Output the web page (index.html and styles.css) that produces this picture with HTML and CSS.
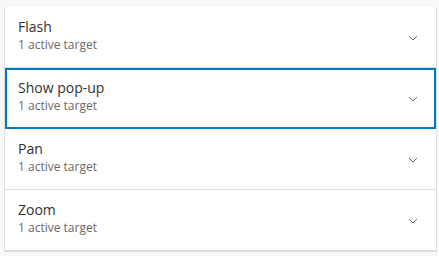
FILE: index.html
```html
<!DOCTYPE html>
<html lang="en">
<head>
<meta charset="utf-8">
<title>Actions</title>
<link rel="stylesheet" href="styles.css">
</head>
<body>
<div class="list">
  <div class="row">
    <div class="text">
      <div class="title">Flash</div>
      <div class="sub">1 active target</div>
    </div>
    <svg class="chev" width="16" height="16" viewBox="0 0 16 16"><polyline points="4,6 8,10 12,6" fill="none" stroke="#6a6a6a" stroke-width="1"/></svg>
  </div>
  <div class="row focused">
    <div class="text">
      <div class="title">Show pop-up</div>
      <div class="sub">1 active target</div>
    </div>
    <svg class="chev" width="16" height="16" viewBox="0 0 16 16"><polyline points="4,6 8,10 12,6" fill="none" stroke="#6a6a6a" stroke-width="1"/></svg>
  </div>
  <div class="row">
    <div class="text">
      <div class="title">Pan</div>
      <div class="sub">1 active target</div>
    </div>
    <svg class="chev" width="16" height="16" viewBox="0 0 16 16"><polyline points="4,6 8,10 12,6" fill="none" stroke="#6a6a6a" stroke-width="1"/></svg>
  </div>
  <div class="row">
    <div class="text">
      <div class="title">Zoom</div>
      <div class="sub">1 active target</div>
    </div>
    <svg class="chev" width="16" height="16" viewBox="0 0 16 16"><polyline points="4,6 8,10 12,6" fill="none" stroke="#6a6a6a" stroke-width="1"/></svg>
  </div>
</div>
</body>
</html>
```
FILE: styles.css
```css
html, body {
  margin: 0;
  padding: 0;
  background: #f8f8f8;
}
body {
  font-family: "Open Sans", "Liberation Sans", sans-serif;
  width: 439px;
  height: 256px;
  overflow: hidden;
}
.list {
  margin: 7px 0 0 4px;
  width: 431px;
  background: #ffffff;
  border-left: 1px solid #dfdfdf;
  border-right: 1px solid #dfdfdf;
  border-bottom: 1px solid #dcdcdc;
}
.row {
  position: relative;
  display: flex;
  align-items: center;
  height: 60px;
  border-bottom: 1px solid #dfdfdf;
  padding: 0 15px 0 13px;
}
.row:last-child {
  border-bottom-color: #dcdcdc;
}
.text {
  flex: 1;
  padding-bottom: 4px;
}
.title {
  font-size: 14px;
  line-height: 20px;
  color: #323232;
}
.sub {
  font-size: 12px;
  line-height: 16px;
  color: #6a6a6a;
}
.chev {
  flex: none;
  display: block;
  margin-top: 1px;
}
.focused::after {
  content: "";
  position: absolute;
  left: 0;
  right: 0;
  top: 0;
  bottom: -1px;
  border: 2px solid #007ac2;
  pointer-events: none;
}
```
